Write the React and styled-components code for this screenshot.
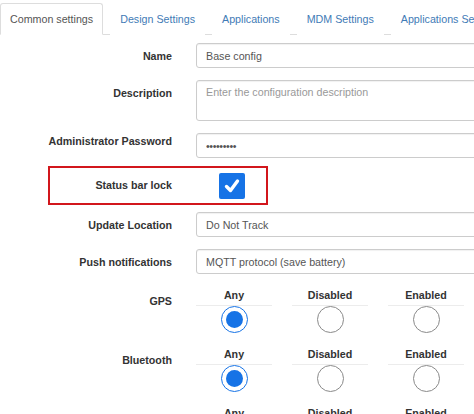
import React from 'react'
import styled, { createGlobalStyle } from 'styled-components'

const GlobalStyle = createGlobalStyle`
    html, body {
        margin: 0;
        padding: 0;
        background: #fff;
        overflow: hidden;
    }
    body {
        font-family: "Liberation Sans", Arial, sans-serif;
        font-size: 10.7px;
        color: #333;
    }
`

const Page = styled.div`
    width: 474px;
    height: 414px;
    overflow: hidden;
    padding-top: 3px;
    box-sizing: border-box;
`

const TabBar = styled.ul`
    display: flex;
    margin: 0;
    padding: 0;
    list-style: none;
    border-bottom: 1px solid #ddd;
    white-space: nowrap;
`

const Tab = styled.li`
    height: 30px;
    line-height: 30px;
    padding: 0 9px;
    margin-right: 7px;
    margin-bottom: -1px;
    border: 1px solid ${p => (p.$active ? '#ddd' : 'transparent')};
    border-bottom-color: ${p => (p.$active ? '#fff' : 'transparent')};
    border-radius: 3px 3px 0 0;
    background: #fff;
    color: ${p => (p.$active ? '#555' : '#3f7bb6')};
    flex-shrink: 0;
`

const Form = styled.div`
    display: flex;
    flex-direction: column;
    gap: 12px;
    padding-top: 8px;
`

const Row = styled.div`
    display: flex;
    align-items: flex-start;
    gap: 24px;
    margin-top: ${p => p.$mt || 0}px;
`

const Label = styled.div`
    width: ${p => p.$w || 172}px;
    flex-shrink: 0;
    text-align: right;
    font-weight: bold;
    line-height: 13px;
    padding-top: ${p => (p.$top === undefined ? 6.5 : p.$top)}px;
    color: #333;
`

const Input = styled.input`
    width: 320px;
    height: 25px;
    box-sizing: border-box;
    padding: 0 9px;
    border: 1px solid #ccc;
    border-radius: 3px;
    box-shadow: inset 0 1px 1px rgba(0, 0, 0, 0.06);
    font-family: inherit;
    font-size: 10.7px;
    color: #555;
    background: #fff;
    outline: none;
    flex-shrink: 0;
    letter-spacing: ${p => p.$spacing || 'normal'};
`

const TextArea = styled.textarea`
    width: 320px;
    height: 41px;
    box-sizing: border-box;
    padding: 5px 9px;
    border: 1px solid #ccc;
    border-radius: 3px;
    box-shadow: inset 0 1px 1px rgba(0, 0, 0, 0.06);
    font-family: inherit;
    font-size: 10.7px;
    line-height: 13px;
    color: #555;
    resize: none;
    outline: none;
    flex-shrink: 0;

    &::placeholder {
        color: #999;
    }
`

const Highlight = styled.div`
    display: flex;
    align-items: center;
    width: 220px;
    height: 39px;
    box-sizing: border-box;
    margin: -4px 0 -5px 48px;
    border: 2px solid #d2161c;
    gap: 47px;
`

const CheckBox = styled.span`
    width: 26px;
    height: 26px;
    border-radius: 2px;
    background: #1673e6;
    display: flex;
    align-items: center;
    justify-content: center;
`

const Options = styled.div`
    display: flex;
    gap: 20px;
`

const Option = styled.div`
    width: 76px;
    display: flex;
    flex-direction: column;
    align-items: center;
`

const OptionHead = styled.div`
    width: 100%;
    text-align: center;
    font-weight: bold;
    line-height: 13px;
    padding-bottom: 3px;
    border-bottom: 1px solid #ececec;
`

const Radio = styled.span`
    margin-top: 0;
    width: 27px;
    height: 27px;
    box-sizing: border-box;
    border-radius: 50%;
    border: ${p => (p.$on ? '1.5px solid #1673e6' : '1px solid #8a8a8a')};
    background: #fff;
    display: flex;
    align-items: center;
    justify-content: center;

    &::after {
        content: '';
        display: ${p => (p.$on ? 'block' : 'none')};
        width: 17px;
        height: 17px;
        border-radius: 50%;
        background: #1673e6;
    }
`

const tabs = ['Common settings', 'Design Settings', 'Applications', 'MDM Settings', 'Applications Settings']
const choices = ['Any', 'Disabled', 'Enabled']

const RadioGroup = ({ label, mt }) => (
    <Row $mt={mt}>
        <Label $top={6}>{label}</Label>
        <Options>
            {choices.map((c, i) => (
                <Option key={c}>
                    <OptionHead>{c}</OptionHead>
                    <Radio $on={i === 0} />
                </Option>
            ))}
        </Options>
    </Row>
)

const App = () => {
    return (
        <Page>
            <GlobalStyle />
            <TabBar>
                {tabs.map((t, i) => (
                    <Tab key={t} $active={i === 0}>{t}</Tab>
                ))}
            </TabBar>
            <Form>
                <Row>
                    <Label>Name</Label>
                    <Input readOnly defaultValue='Base config' />
                </Row>
                <Row>
                    <Label>Description</Label>
                    <TextArea readOnly placeholder='Enter the configuration description' />
                </Row>
                <Row>
                    <Label $top={1.5}>Administrator Password</Label>
                    <Input readOnly defaultValue='•••••••••' $spacing='-0.4px' />
                </Row>
                <Highlight>
                    <Label $w={122} $top={0}>Status bar lock</Label>
                    <CheckBox>
                        <svg width='18' height='18' viewBox='0 0 18 18'>
                            <polyline points='3.5,9.5 7.5,13.5 14.5,4' fill='none' stroke='#fff' strokeWidth='3.4' strokeLinecap='round' strokeLinejoin='round' />
                        </svg>
                    </CheckBox>
                </Highlight>
                <Row>
                    <Label>Update Location</Label>
                    <Input readOnly defaultValue='Do Not Track' />
                </Row>
                <Row>
                    <Label>Push notifications</Label>
                    <Input readOnly defaultValue='MQTT protocol (save battery)' />
                </Row>
                <RadioGroup label='GPS' mt={3} />
                <RadioGroup label='Bluetooth' mt={3} />
                <RadioGroup label='Wi-Fi' mt={3} />
            </Form>
        </Page>
    )
}

export default App
